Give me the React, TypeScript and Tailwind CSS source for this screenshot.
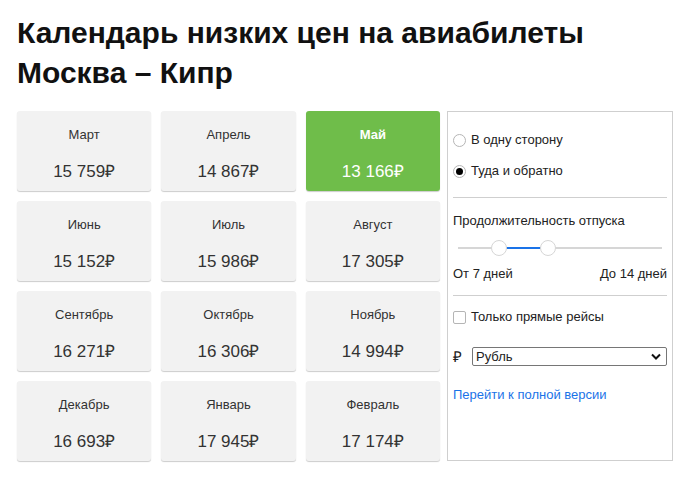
import React from 'react';

const months = [
  { name: 'Март', price: '15 759' },
  { name: 'Апрель', price: '14 867' },
  { name: 'Май', price: '13 166', active: true },
  { name: 'Июнь', price: '15 152' },
  { name: 'Июль', price: '15 986' },
  { name: 'Август', price: '17 305' },
  { name: 'Сентябрь', price: '16 271' },
  { name: 'Октябрь', price: '16 306' },
  { name: 'Ноябрь', price: '14 994' },
  { name: 'Декабрь', price: '16 693' },
  { name: 'Январь', price: '17 945' },
  { name: 'Февраль', price: '17 174' },
];

const Radio: React.FC<{ checked?: boolean; label: string }> = ({ checked, label }) => (
  <label className="flex items-center gap-[5px] h-[20px]">
    <span className="w-[13px] h-[13px] rounded-full border border-[#b5b5b5] bg-white flex items-center justify-center">
      {checked && <span className="w-[7px] h-[7px] rounded-full bg-black" />}
    </span>
    <span>{label}</span>
  </label>
);

const App: React.FC = () => {
  return (
    <div className="bg-white w-[681px] h-[488px] pl-[17px] pt-[13px] text-[#222]" style={{ fontFamily: '"Liberation Sans", Arial, sans-serif' }}>
      <h1 className="text-[30px] leading-[40px] font-bold text-[#111]">
        Календарь низких цен на авиабилеты
        <br />
        Москва – Кипр
      </h1>

      <div className="mt-[18px] flex gap-[7px]">
        {/* Month grid */}
        <div className="grid grid-cols-3 gap-[10px] w-[423px]">
          {months.map(m => (
            <div
              key={m.name}
              className={`h-[80px] rounded-[3px] flex flex-col items-center shadow-[0_1px_1px_rgba(0,0,0,0.2)] ${m.active ? 'bg-[#6fbd4a] text-white' : 'bg-[#f2f2f2] text-[#333]'}`}
            >
              <div className={`mt-[16px] text-[13px] leading-[16px] ${m.active ? 'font-bold' : ''}`}>{m.name}</div>
              <div className="mt-[19px] text-[17px] leading-[20px]">{m.price}₽</div>
            </div>
          ))}
        </div>

        {/* Filters */}
        <div className="w-[226px] h-[350px] border border-[#cfcfcf] px-[5px] text-[13px] text-[#222]">
          <div className="pt-[18px] flex flex-col gap-[11px]">
            <Radio label="В одну сторону" />
            <Radio checked label="Туда и обратно" />
          </div>
          <div className="mt-[16px] border-t border-[#cfcfcf]" />

          <div className="mt-[15px] leading-[16px]">Продолжительность отпуска</div>
          <div className="relative mt-[8px] h-[22px] mx-[5px]">
            <div className="absolute left-0 right-0 top-[10px] h-[2px] bg-[#d6d6d6]" />
            <div className="absolute left-[41px] w-[50px] top-[10px] h-[2px] bg-[#1a73e8]" />
            <div className="absolute left-[33px] top-[3px] w-[16px] h-[16px] rounded-full bg-white border border-[#d6d6d6]" />
            <div className="absolute left-[82px] top-[3px] w-[16px] h-[16px] rounded-full bg-white border border-[#d6d6d6]" />
          </div>
          <div className="mt-[7px] flex justify-between leading-[16px]">
            <span>От 7 дней</span>
            <span>До 14 дней</span>
          </div>
          <div className="mt-[13px] border-t border-[#cfcfcf]" />

          <label className="mt-[13px] flex items-center gap-[5px] h-[16px]">
            <span className="w-[13px] h-[13px] rounded-[2px] border border-[#b5b5b5] bg-white" />
            <span>Только прямые рейсы</span>
          </label>

          <div className="mt-[22px] flex items-center gap-[10px]">
            <span className="text-[15px] leading-[16px]">₽</span>
            <div className="flex-1 h-[19px] border border-[#767676] rounded-[2px] flex items-center justify-between pl-[3px] pr-[5px]">
              <span>Рубль</span>
              <svg width="10" height="7" viewBox="0 0 10 7">
                <path d="M1 1.5 L5 5.5 L9 1.5" fill="none" stroke="#111" strokeWidth="2" />
              </svg>
            </div>
          </div>

          <a className="block mt-[21px] text-[#1a73e8] leading-[16px]">Перейти к полной версии</a>
        </div>
      </div>
    </div>
  );
};

export default App;
